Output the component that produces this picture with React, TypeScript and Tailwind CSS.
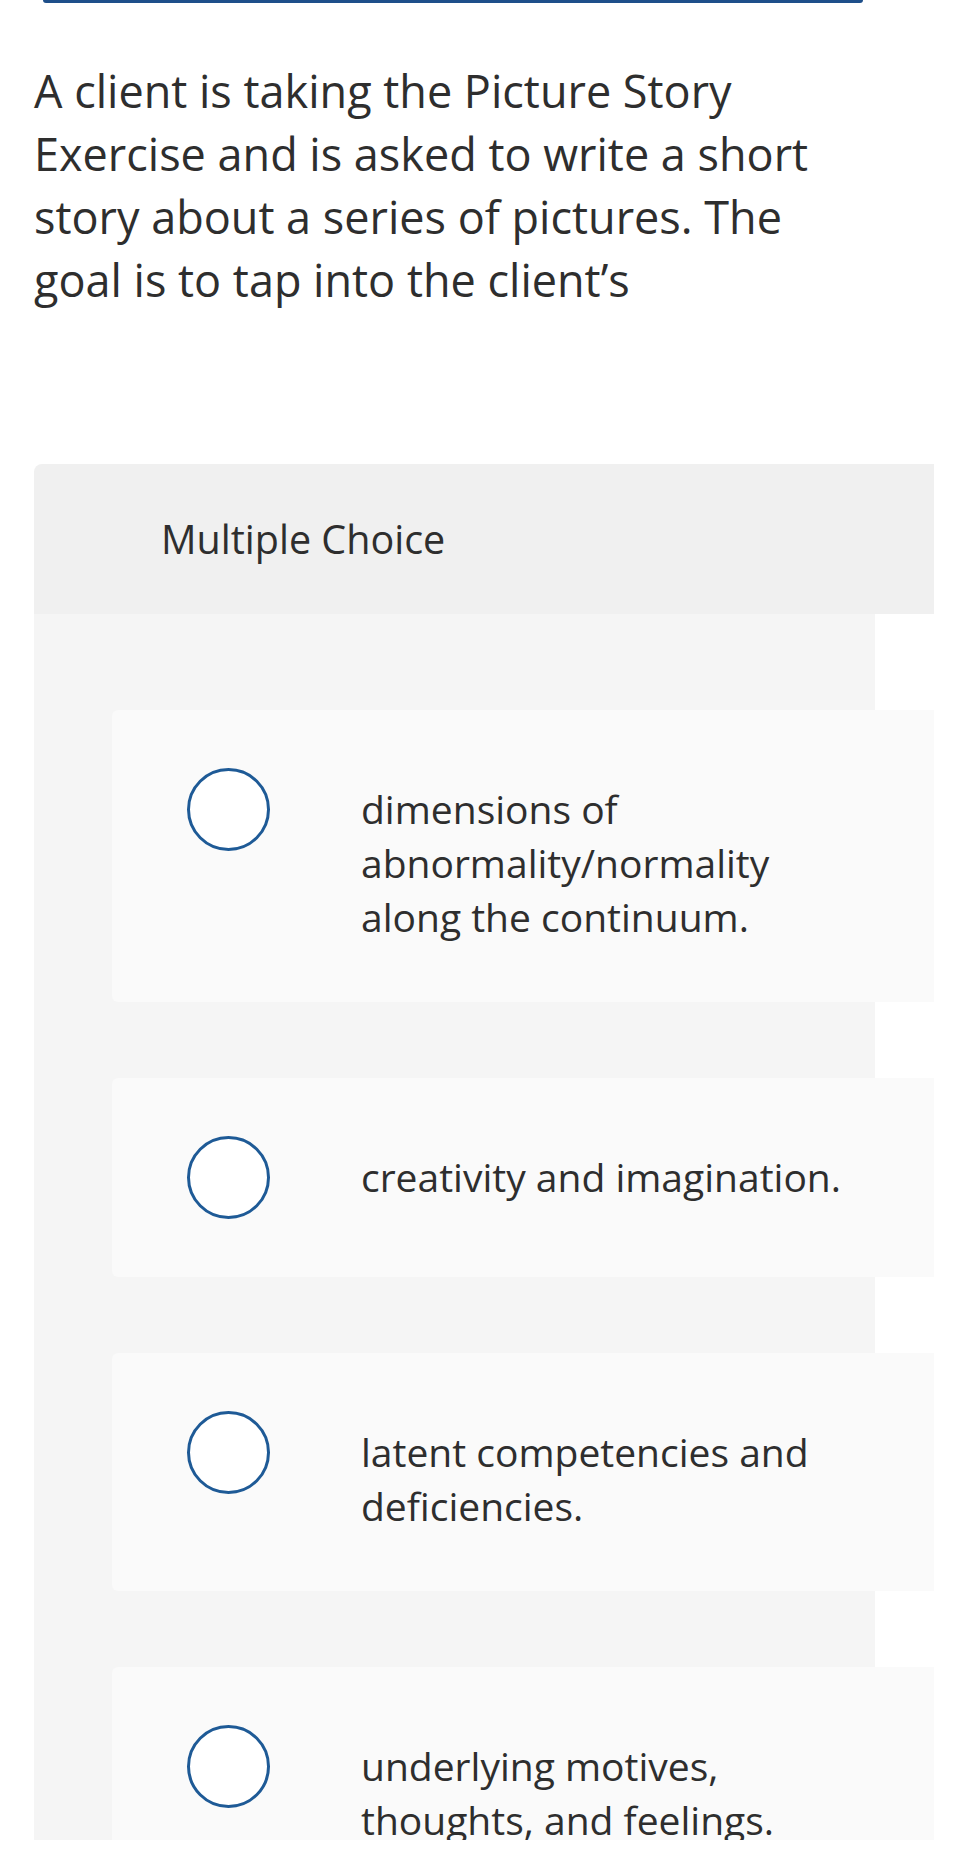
import React from "react";

const options = [
  "dimensions of abnormality/normality along the continuum.",
  "creativity and imagination.",
  "latent competencies and deficiencies.",
  "underlying motives, thoughts, and feelings.",
];

function RadioCircle() {
  return (
    <div className="h-[83px] w-[83px] shrink-0 rounded-full border-[3px] border-[#1e5a96] bg-white" />
  );
}

export default function App() {
  return (
    <div className="min-h-[1858px] bg-white font-['Open_Sans',sans-serif] text-[#2e2e2e]">
      <div className="h-[1840px] overflow-hidden px-[34px]">
        {/* bottom edge of the button above */}
        <div className="ml-[9px] h-[3px] w-[820px] rounded-b-[3px] bg-[#1e4f8a]" />

        <p className="mt-[56px] w-[830px] text-[45px] leading-[63px]">
          A client is taking the Picture Story Exercise and is asked to write a short story about a
          series of pictures. The goal is to tap into the client’s
        </p>

        <div className="mt-[153px] w-[900px]">
          <div className="flex h-[150px] items-center rounded-tl-[8px] bg-[#f0f0f0] pl-[127px]">
            <span className="text-[39.5px] leading-[54px]">Multiple Choice</span>
          </div>

          <div className="flex w-[841px] flex-col gap-[76px] bg-[#f5f5f5] pb-[80px] pl-[78px] pt-[96px]">
            {options.map((text) => (
              <div
                key={text}
                className="flex w-[822px] items-start rounded-l-[6px] bg-[#fafafa] py-[58px] pl-[75px]"
              >
                <RadioCircle />
                <div className="ml-[91px] mt-[14px] w-[500px] text-[39px] leading-[54px]">{text}</div>
              </div>
            ))}
          </div>
        </div>
      </div>
    </div>
  );
}
